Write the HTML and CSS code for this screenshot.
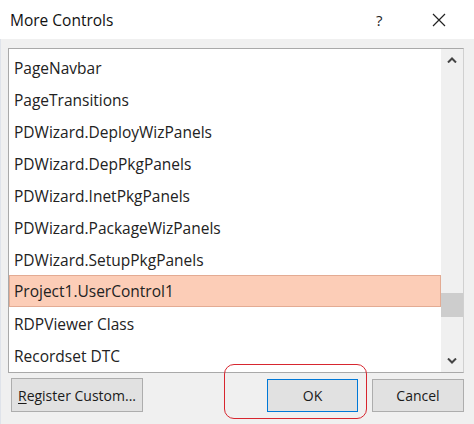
FILE: index.html
```html
<!DOCTYPE html>
<html>
<head>
<meta charset="utf-8">
<link rel="stylesheet" href="styles.css">
</head>
<body>
<div class="dialog">
  <div class="titlebar">
    <span class="title">More Controls</span>
    <span class="help">?</span>
    <span class="close">
      <svg width="14" height="14" viewBox="0 0 14 14"><path d="M1 1 L13 13 M13 1 L1 13" stroke="#222" stroke-width="1.2" fill="none"/></svg>
    </span>
  </div>
  <div class="body">
    <div class="listbox">
      <ul class="items">
        <li class="item">PageNavbar</li>
        <li class="item">PageTransitions</li>
        <li class="item">PDWizard.DeployWizPanels</li>
        <li class="item">PDWizard.DepPkgPanels</li>
        <li class="item">PDWizard.InetPkgPanels</li>
        <li class="item">PDWizard.PackageWizPanels</li>
        <li class="item">PDWizard.SetupPkgPanels</li>
        <li class="item selected">Project1.UserControl1</li>
        <li class="item">RDPViewer Class</li>
        <li class="item">Recordset DTC</li>
      </ul>
      <div class="scrollbar">
        <div class="arrow">
          <svg width="10" height="6" viewBox="0 0 10 6"><path d="M1 5.5 L5 1.5 L9 5.5" stroke="#444" stroke-width="2" fill="none"/></svg>
        </div>
        <div class="track">
          <div class="thumb"></div>
        </div>
        <div class="arrow">
          <svg width="10" height="6" viewBox="0 0 10 6"><path d="M1 0.5 L5 4.5 L9 0.5" stroke="#444" stroke-width="2" fill="none"/></svg>
        </div>
      </div>
    </div>
    <div class="buttons">
      <button class="btn register"><u>R</u>egister Custom...</button>
      <div class="right">
        <button class="btn ok">OK</button>
        <button class="btn cancel">Cancel</button>
      </div>
    </div>
    <div class="annotation"></div>
  </div>
</div>
</body>
</html>
```

FILE: styles.css
```css
html, body {
  margin: 0;
  padding: 0;
}
body {
  width: 474px;
  height: 424px;
  overflow: hidden;
  font-family: "Open Sans", "Noto Sans", sans-serif;
  color: #1a1a1a;
  background: #f0f0f0;
}
.dialog {
  width: 474px;
  height: 424px;
  display: flex;
  flex-direction: column;
}
.titlebar {
  height: 39px;
  background: #fff;
  display: flex;
  align-items: center;
  padding-left: 10px;
  box-sizing: border-box;
}
.title {
  font-size: 15.5px;
  flex: 1;
  color: #111;
}
.help {
  font-size: 15px;
  width: 56px;
  color: #222;
}
.close {
  width: 42px;
  display: flex;
  align-items: center;
}
.body {
  position: relative;
  flex: 1;
  background: #f0f0f0;
  padding: 9px 10px 0 8px;
  border-left: 1px solid #dfe3ea;
}
.listbox {
  height: 325px;
  box-sizing: border-box;
  border: 1px solid #a9a9a9;
  border-right-color: #d0d0d0;
  background: #fff;
  display: flex;
  margin-left: -1px;
}
.items {
  list-style: none;
  margin: 0;
  padding: 2px 0 0 0;
  flex: 1;
  overflow: hidden;
}
.item {
  height: 32px;
  line-height: 32px;
  padding-top: 1px;
  font-size: 15.5px;
  padding-left: 5px;
  box-sizing: border-box;
  color: #222;
  white-space: nowrap;
}
.item.selected {
  background: #fccdb7;
  border: 1px solid #e3ab93;
  padding-left: 4px;
  padding-top: 0;
  line-height: 30px;
}
.scrollbar {
  width: 22px;
  background: #f0f0f0;
  display: flex;
  flex-direction: column;
}
.arrow {
  height: 22px;
  display: flex;
  align-items: center;
  justify-content: center;
}
.track {
  flex: 1;
  position: relative;
}
.thumb {
  position: absolute;
  left: 0;
  right: 0;
  top: 222px;
  height: 24px;
  background: #cdcdcd;
}
.buttons {
  display: flex;
  justify-content: space-between;
  margin-top: 5px;
  padding-left: 2px;
}
.right {
  display: flex;
  gap: 14px;
  padding-top: 1px;
}
.btn {
  font-family: "Open Sans", "Noto Sans", sans-serif;
  font-size: 14px;
  color: #1a1a1a;
  background: #e1e1e1;
  border: 1px solid #adadad;
  height: 34px;
  padding: 0;
  margin: 0;
}
.btn u {
  text-decoration-thickness: 1px;
  text-underline-offset: 2px;
}
.register {
  width: 132px;
}
.ok {
  width: 91px;
  height: 33px;
  border: 1px solid #0078d7;
}
.cancel {
  width: 92px;
  height: 33px;
}
.annotation {
  position: absolute;
  left: 223px;
  top: 325px;
  width: 143px;
  height: 55px;
  box-sizing: border-box;
  border: 1.5px solid #d7262f;
  border-radius: 10px;
}
```
